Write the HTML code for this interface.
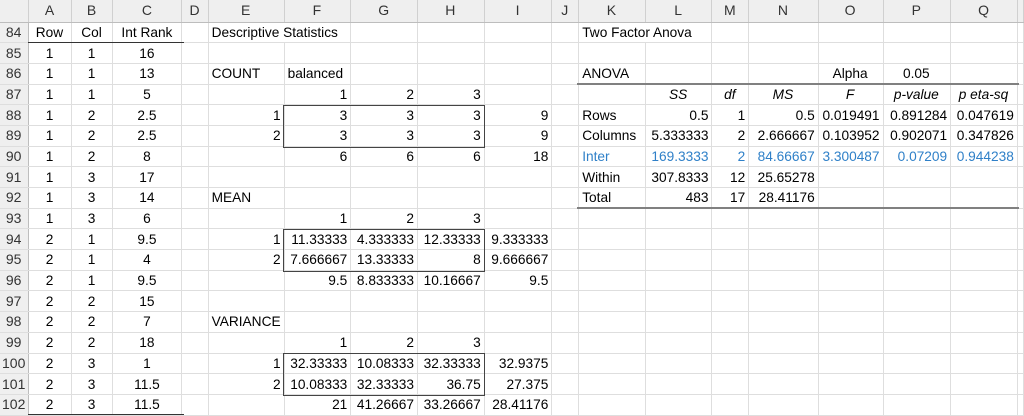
<!DOCTYPE html>
<html><head><meta charset="utf-8"><style>
body{margin:0;background:#fff;width:1024px;height:416px;overflow:hidden;position:relative;font-family:"Liberation Sans",Arial,sans-serif;font-size:13.7px;color:#000}
table{border-collapse:collapse;table-layout:fixed;position:absolute;left:0;top:0}
td{height:20.7px;padding:0 3px 0 2px;border-right:1px solid #dedede;border-bottom:1px solid #dedede;white-space:nowrap;overflow:visible;text-align:right;box-sizing:border-box;line-height:19px}
tr.h td{height:22px;background:#efefef;color:#333;text-align:center;border-right:1px solid #d0d0d0;border-bottom:1px solid #bdbdbd;font-size:14px}
td.r{background:#efefef;color:#333;text-align:center;border-right:1px solid #bdbdbd;font-size:14px}
td.c{text-align:center}td.l{text-align:left;padding-left:3px}td.i{font-style:italic;text-align:center}
.b{color:#2f80c8}
.ln{position:absolute;background:#333}
.bx{position:absolute;border:1px solid #444;box-sizing:border-box}
.g{position:absolute;height:2px;background:#808080}
</style></head><body>
<table>
<colgroup><col style="width:28px"><col style="width:43px"><col style="width:43px"><col style="width:70px"><col style="width:27px"><col style="width:68px"><col style="width:67px"><col style="width:67px"><col style="width:67px"><col style="width:68px"><col style="width:28px"><col style="width:67px"><col style="width:67px"><col style="width:38px"><col style="width:70px"><col style="width:65px"><col style="width:68px"><col style="width:67px"><col style="width:6px"></colgroup>
<tr class="h"><td></td><td>A</td><td>B</td><td>C</td><td>D</td><td>E</td><td>F</td><td>G</td><td>H</td><td>I</td><td>J</td><td>K</td><td>L</td><td>M</td><td>N</td><td>O</td><td>P</td><td>Q</td><td></td></tr>
<tr><td class="r">84</td><td class="c">Row</td><td class="c">Col</td><td class="c">Int Rank</td><td></td><td class="l" colspan="2">Descriptive Statistics</td><td></td><td></td><td></td><td></td><td class="l" colspan="2">Two Factor Anova</td><td></td><td></td><td></td><td></td><td></td><td></td></tr>
<tr><td class="r">85</td><td class="c">1</td><td class="c">1</td><td class="c">16</td><td></td><td></td><td></td><td></td><td></td><td></td><td></td><td></td><td></td><td></td><td></td><td></td><td></td><td></td><td></td></tr>
<tr><td class="r">86</td><td class="c">1</td><td class="c">1</td><td class="c">13</td><td></td><td class="l">COUNT</td><td class="l">balanced</td><td></td><td></td><td></td><td></td><td class="l">ANOVA</td><td></td><td></td><td></td><td class="c">Alpha</td><td class="c">0.05</td><td></td><td></td></tr>
<tr><td class="r">87</td><td class="c">1</td><td class="c">1</td><td class="c">5</td><td></td><td></td><td>1</td><td>2</td><td>3</td><td></td><td></td><td></td><td class="i">SS</td><td class="i">df</td><td class="i">MS</td><td class="i">F</td><td class="i">p-value</td><td class="i">p eta-sq</td><td></td></tr>
<tr><td class="r">88</td><td class="c">1</td><td class="c">2</td><td class="c">2.5</td><td></td><td>1</td><td>3</td><td>3</td><td>3</td><td>9</td><td></td><td class="l">Rows</td><td>0.5</td><td>1</td><td>0.5</td><td>0.019491</td><td>0.891284</td><td>0.047619</td><td></td></tr>
<tr><td class="r">89</td><td class="c">1</td><td class="c">2</td><td class="c">2.5</td><td></td><td>2</td><td>3</td><td>3</td><td>3</td><td>9</td><td></td><td class="l">Columns</td><td>5.333333</td><td>2</td><td>2.666667</td><td>0.103952</td><td>0.902071</td><td>0.347826</td><td></td></tr>
<tr><td class="r">90</td><td class="c">1</td><td class="c">2</td><td class="c">8</td><td></td><td></td><td>6</td><td>6</td><td>6</td><td>18</td><td></td><td class="l b">Inter</td><td class="b">169.3333</td><td class="b">2</td><td class="b">84.66667</td><td class="b">3.300487</td><td class="b">0.07209</td><td class="b">0.944238</td><td></td></tr>
<tr><td class="r">91</td><td class="c">1</td><td class="c">3</td><td class="c">17</td><td></td><td></td><td></td><td></td><td></td><td></td><td></td><td class="l">Within</td><td>307.8333</td><td>12</td><td>25.65278</td><td></td><td></td><td></td><td></td></tr>
<tr><td class="r">92</td><td class="c">1</td><td class="c">3</td><td class="c">14</td><td></td><td class="l">MEAN</td><td></td><td></td><td></td><td></td><td></td><td class="l">Total</td><td>483</td><td>17</td><td>28.41176</td><td></td><td></td><td></td><td></td></tr>
<tr><td class="r">93</td><td class="c">1</td><td class="c">3</td><td class="c">6</td><td></td><td></td><td>1</td><td>2</td><td>3</td><td></td><td></td><td></td><td></td><td></td><td></td><td></td><td></td><td></td><td></td></tr>
<tr><td class="r">94</td><td class="c">2</td><td class="c">1</td><td class="c">9.5</td><td></td><td>1</td><td>11.33333</td><td>4.333333</td><td>12.33333</td><td>9.333333</td><td></td><td></td><td></td><td></td><td></td><td></td><td></td><td></td><td></td></tr>
<tr><td class="r">95</td><td class="c">2</td><td class="c">1</td><td class="c">4</td><td></td><td>2</td><td>7.666667</td><td>13.33333</td><td>8</td><td>9.666667</td><td></td><td></td><td></td><td></td><td></td><td></td><td></td><td></td><td></td></tr>
<tr><td class="r">96</td><td class="c">2</td><td class="c">1</td><td class="c">9.5</td><td></td><td></td><td>9.5</td><td>8.833333</td><td>10.16667</td><td>9.5</td><td></td><td></td><td></td><td></td><td></td><td></td><td></td><td></td><td></td></tr>
<tr><td class="r">97</td><td class="c">2</td><td class="c">2</td><td class="c">15</td><td></td><td></td><td></td><td></td><td></td><td></td><td></td><td></td><td></td><td></td><td></td><td></td><td></td><td></td><td></td></tr>
<tr><td class="r">98</td><td class="c">2</td><td class="c">2</td><td class="c">7</td><td></td><td class="l">VARIANCE</td><td></td><td></td><td></td><td></td><td></td><td></td><td></td><td></td><td></td><td></td><td></td><td></td><td></td></tr>
<tr><td class="r">99</td><td class="c">2</td><td class="c">2</td><td class="c">18</td><td></td><td></td><td>1</td><td>2</td><td>3</td><td></td><td></td><td></td><td></td><td></td><td></td><td></td><td></td><td></td><td></td></tr>
<tr><td class="r">100</td><td class="c">2</td><td class="c">3</td><td class="c">1</td><td></td><td>1</td><td>32.33333</td><td>10.08333</td><td>32.33333</td><td>32.9375</td><td></td><td></td><td></td><td></td><td></td><td></td><td></td><td></td><td></td></tr>
<tr><td class="r">101</td><td class="c">2</td><td class="c">3</td><td class="c">11.5</td><td></td><td>2</td><td>10.08333</td><td>32.33333</td><td>36.75</td><td>27.375</td><td></td><td></td><td></td><td></td><td></td><td></td><td></td><td></td><td></td></tr>
<tr><td class="r">102</td><td class="c">2</td><td class="c">3</td><td class="c">11.5</td><td></td><td></td><td>21</td><td>41.26667</td><td>33.26667</td><td>28.41176</td><td></td><td></td><td></td><td></td><td></td><td></td><td></td><td></td><td></td></tr>
</table>
<div class="ln" style="left:28px;top:42px;width:156px;height:1px"></div>
<div class="ln" style="left:28px;top:414px;width:156px;height:1px"></div>
<div class="bx" style="left:283px;top:105px;width:202px;height:43px"></div>
<div class="bx" style="left:283px;top:229px;width:202px;height:43px"></div>
<div class="bx" style="left:283px;top:353px;width:202px;height:43px"></div>
<div class="g" style="left:577px;top:83px;width:442px"></div>
<div class="g" style="left:577px;top:207px;width:442px"></div>
</body></html>
